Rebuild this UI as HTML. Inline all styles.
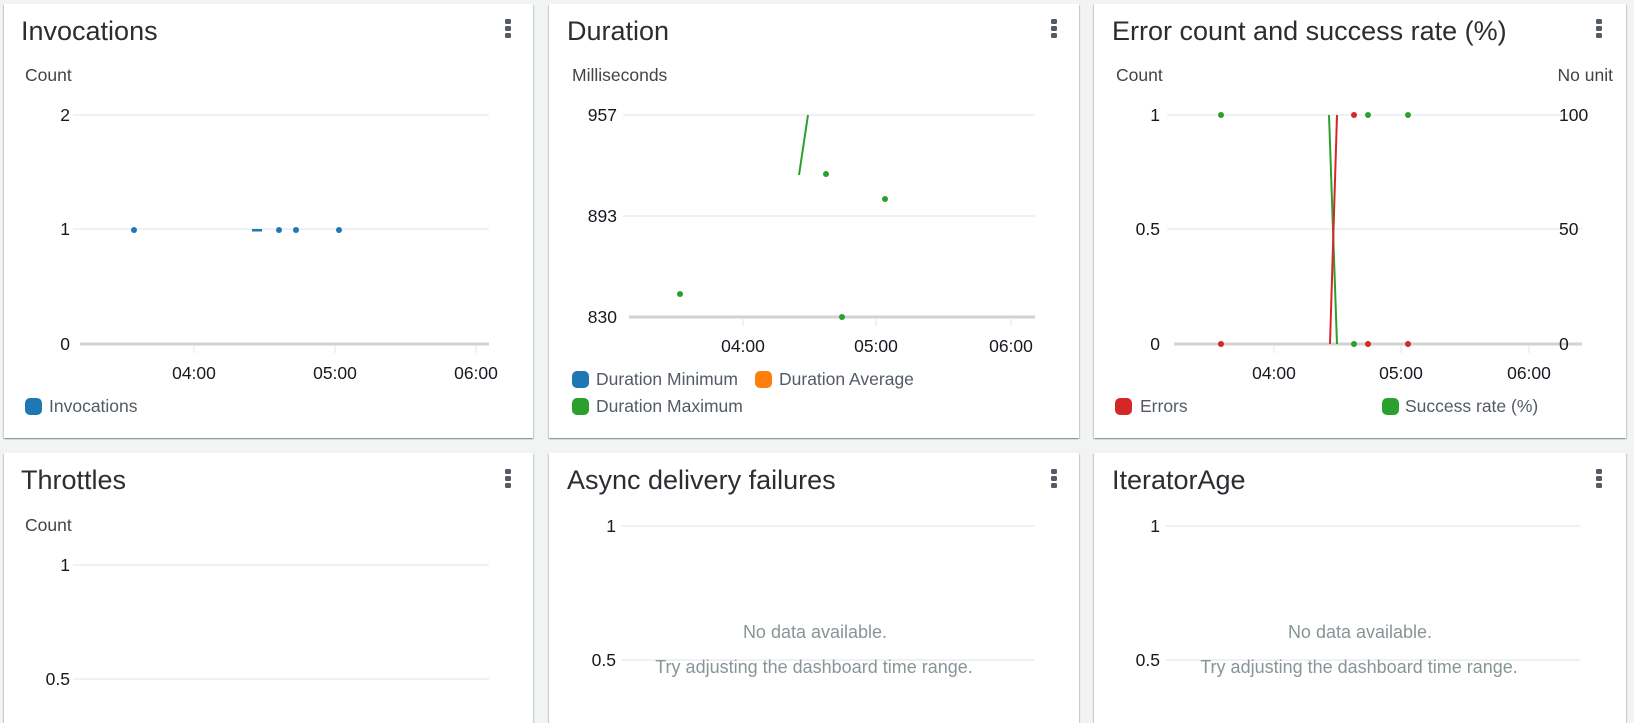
<!DOCTYPE html>
<html><head><meta charset="utf-8"><style>
html,body{margin:0;padding:0;width:1634px;height:710px;overflow:hidden;background:#f2f3f3;font-family:"Liberation Sans",Arial,sans-serif}
.p{position:absolute;background:#fff;box-shadow:0 1px 1px 0 rgba(0,28,36,.3),1px 1px 1px 0 rgba(0,28,36,.15),-1px 1px 1px 0 rgba(0,28,36,.15)}
svg{position:absolute;left:0;top:0}
</style></head><body>
<div class="p" style="left:4px;top:4px;width:529px;height:434px"></div>
<div class="p" style="left:549px;top:4px;width:530px;height:434px"></div>
<div class="p" style="left:1094px;top:4px;width:532px;height:434px"></div>
<div class="p" style="left:4px;top:453px;width:529px;height:270px"></div>
<div class="p" style="left:549px;top:453px;width:530px;height:270px"></div>
<div class="p" style="left:1094px;top:453px;width:532px;height:270px"></div>
<svg width="1634" height="710" font-family="Liberation Sans, Arial, sans-serif">
<defs>
<g id="keb" fill="#545b64"><rect x="-3" y="0" width="6" height="5" rx="1.5"/><rect x="-3" y="7" width="6" height="5" rx="1.5"/><rect x="-3" y="14" width="6" height="5" rx="1.5"/></g>
</defs>
<g font-size="27" fill="#2a2e33">
<text x="21" y="40">Invocations</text>
<text x="567" y="40">Duration</text>
<text x="1112" y="40">Error count and success rate (%)</text>
<text x="21" y="489">Throttles</text>
<text x="567" y="489">Async delivery failures</text>
<text x="1112" y="489">IteratorAge</text>
</g>
<use href="#keb" x="508" y="19"/><use href="#keb" x="1054" y="19"/><use href="#keb" x="1599" y="19"/>
<use href="#keb" x="508" y="469"/><use href="#keb" x="1054" y="469"/><use href="#keb" x="1599" y="469"/>
<g font-size="17.5" fill="#444">
<text x="25" y="81">Count</text>
<text x="572" y="81">Milliseconds</text>
<text x="1116" y="81">Count</text>
<text x="1613" y="81" text-anchor="end">No unit</text>
<text x="25" y="531">Count</text>
</g>
<g stroke="#eaeded" stroke-width="1.5">
<line x1="73" y1="115" x2="489" y2="115"/><line x1="73" y1="229" x2="489" y2="229"/>
<line x1="623" y1="115" x2="1035" y2="115"/><line x1="623" y1="216" x2="1035" y2="216"/>
<line x1="1167" y1="115" x2="1582" y2="115"/><line x1="1167" y1="229" x2="1582" y2="229"/>
<line x1="73" y1="565" x2="489" y2="565"/><line x1="73" y1="679" x2="489" y2="679"/>
<line x1="621" y1="526" x2="1035" y2="526"/><line x1="621" y1="660" x2="1035" y2="660"/>
<line x1="1166" y1="526" x2="1580" y2="526"/><line x1="1166" y1="660" x2="1580" y2="660"/>
</g>
<g stroke="#d0d2d3" stroke-width="3">
<line x1="80" y1="344" x2="489" y2="344"/>
<line x1="629" y1="317" x2="1035" y2="317"/>
<line x1="1174" y1="344" x2="1582" y2="344"/>
</g>
<g stroke="#e3e5e5" stroke-width="1">
<line x1="194" y1="346" x2="194" y2="353"/><line x1="335" y1="346" x2="335" y2="353"/><line x1="476" y1="346" x2="476" y2="353"/>
<line x1="743" y1="319" x2="743" y2="326"/><line x1="876" y1="319" x2="876" y2="326"/><line x1="1011" y1="319" x2="1011" y2="326"/>
<line x1="1274" y1="346" x2="1274" y2="353"/><line x1="1401" y1="346" x2="1401" y2="353"/><line x1="1529" y1="346" x2="1529" y2="353"/>
</g>
<g font-size="17.5" fill="#16191f">
<g text-anchor="end">
<text x="70" y="121">2</text><text x="70" y="235">1</text><text x="70" y="350">0</text>
<text x="617" y="121">957</text><text x="617" y="222">893</text><text x="617" y="323">830</text>
<text x="1160" y="121">1</text><text x="1160" y="235">0.5</text><text x="1160" y="350">0</text>
<text x="70" y="571">1</text><text x="70" y="685">0.5</text>
<text x="616" y="532">1</text><text x="616" y="666">0.5</text>
<text x="1160" y="532">1</text><text x="1160" y="666">0.5</text>
</g>
<text x="1559" y="121">100</text><text x="1559" y="235">50</text><text x="1559" y="350">0</text>
<g text-anchor="middle">
<text x="194" y="379">04:00</text><text x="335" y="379">05:00</text><text x="476" y="379">06:00</text>
<text x="743" y="352">04:00</text><text x="876" y="352">05:00</text><text x="1011" y="352">06:00</text>
<text x="1274" y="379">04:00</text><text x="1401" y="379">05:00</text><text x="1529" y="379">06:00</text>
</g>
</g>
<g fill="#1f77b4"><circle cx="134" cy="230" r="3"/><rect x="252" y="229" width="10" height="2.5"/><circle cx="279" cy="230" r="3"/><circle cx="296" cy="230" r="3"/><circle cx="339" cy="230" r="3"/></g>
<line x1="808" y1="115" x2="799" y2="175" stroke="#2ca02c" stroke-width="2"/>
<g fill="#2ca02c"><circle cx="826" cy="174" r="3"/><circle cx="885" cy="199" r="3"/><circle cx="680" cy="294" r="3"/><circle cx="842" cy="317" r="3"/></g>
<line x1="1329" y1="115" x2="1337" y2="344" stroke="#2ca02c" stroke-width="2"/>
<line x1="1337" y1="115" x2="1330" y2="344" stroke="#d62728" stroke-width="2"/>
<g fill="#2ca02c"><circle cx="1221" cy="115" r="3"/><circle cx="1368" cy="115" r="3"/><circle cx="1408" cy="115" r="3"/><circle cx="1354" cy="344" r="3"/></g>
<g fill="#d62728"><circle cx="1354" cy="115" r="3"/><circle cx="1221" cy="344" r="3"/><circle cx="1368" cy="344" r="3"/><circle cx="1408" cy="344" r="3"/></g>
<rect x="25" y="398" width="17" height="17" rx="5" fill="#1f77b4"/>
<rect x="572" y="371" width="17" height="17" rx="5" fill="#1f77b4"/>
<rect x="755" y="371" width="17" height="17" rx="5" fill="#ff7f0e"/>
<rect x="572" y="398" width="17" height="17" rx="5" fill="#2ca02c"/>
<rect x="1115" y="398" width="17" height="17" rx="5" fill="#d62728"/>
<rect x="1382" y="398" width="17" height="17" rx="5" fill="#2ca02c"/>
<g font-size="17.5" fill="#545b64">
<text x="49" y="412">Invocations</text>
<text x="596" y="385">Duration Minimum</text>
<text x="779" y="385">Duration Average</text>
<text x="596" y="412">Duration Maximum</text>
<text x="1140" y="412">Errors</text>
<text x="1405" y="412">Success rate (%)</text>
</g>
<g font-size="18" fill="#879596" text-anchor="middle">
<text x="815" y="638">No data available.</text>
<text x="814" y="673">Try adjusting the dashboard time range.</text>
<text x="1360" y="638">No data available.</text>
<text x="1359" y="673">Try adjusting the dashboard time range.</text>
</g>
</svg>
</body></html>
